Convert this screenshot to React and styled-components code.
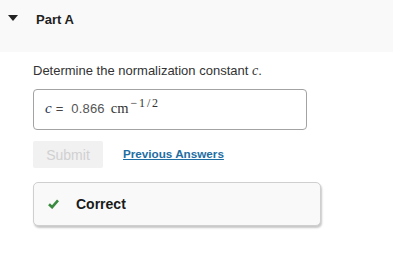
import React from "react";
import styled, { createGlobalStyle } from "styled-components";

const Global = createGlobalStyle`
  html, body { margin: 0; padding: 0; background: #ffffff; }
  body { font-family: "Liberation Sans", Arial, sans-serif; color: #333; }
`;

const Page = styled.div`
  width: 393px;
  min-height: 254px;
  background: #fff;
`;

const Header = styled.div`
  height: 52px;
  box-sizing: border-box;
  background: #f9f9f9;
  padding: 11px 0 0 8px;
  display: flex;
  align-items: flex-start;
`;

const Caret = styled.span`
  width: 0;
  height: 0;
  border-left: 5px solid transparent;
  border-right: 5px solid transparent;
  border-top: 6px solid #222;
  margin-top: 4px;
  margin-right: 18px;
`;

const PartTitle = styled.h2`
  margin: 0;
  font-size: 13px;
  line-height: 18px;
  font-weight: 700;
  color: #1f1f1f;
`;

const Body = styled.div`
  padding: 10px 0 0 33px;
  display: flex;
  flex-direction: column;
  align-items: flex-start;
`;

const Prompt = styled.p`
  margin: 0 0 9px 0;
  font-size: 13px;
  line-height: 18px;
  color: #333;
`;

const MathVar = styled.i`
  font-family: "Liberation Serif", "Times New Roman", serif;
  font-size: ${(p) => p.$size || 14}px;
  color: ${(p) => p.$color || "#333"};
`;

const AnswerBox = styled.div`
  width: 274px;
  height: 41px;
  box-sizing: border-box;
  border: 1px solid #a3a3a3;
  border-radius: 4px;
  padding: 9px 11px 0 11px;
  font-size: 13px;
  line-height: 18px;
  color: #555;
  white-space: nowrap;
`;

const Eq = styled.span`
  color: #444;
  margin: 0 8px 0 4px;
`;

const Value = styled.span`
  color: #555;
  font-size: 13px;
  letter-spacing: 0.2px;
`;

const Unit = styled.span`
  font-family: "Liberation Serif", "Times New Roman", serif;
  font-size: 14.5px;
  color: #333;
  margin-left: 6px;
`;

const Sup = styled.span`
  font-family: "Liberation Serif", "Times New Roman", serif;
  font-size: 12px;
  letter-spacing: 1.8px;
  color: #333;
  vertical-align: 6px;
  line-height: 0;
  margin-left: 2px;
`;

const Actions = styled.div`
  display: flex;
  align-items: center;
  margin-top: 11px;
  gap: 20px;
`;

const SubmitButton = styled.button`
  width: 70px;
  height: 27px;
  border: none;
  border-radius: 2px;
  background: #f1f1f1;
  color: #d0d0d0;
  font-family: "Liberation Sans", Arial, sans-serif;
  font-size: 14px;
  padding: 0;
  cursor: default;
`;

const Link = styled.a`
  font-size: 11.7px;
  line-height: 15px;
  font-weight: 700;
  color: #1f6ea3;
  text-decoration: underline;
  margin-bottom: 3px;
  cursor: pointer;
`;

const Feedback = styled.div`
  margin-top: 14px;
  width: 288px;
  height: 44px;
  box-sizing: border-box;
  border: 1px solid #cfcfcf;
  border-radius: 5px;
  background: #f9f9f9;
  box-shadow: 1px 2px 2px rgba(0, 0, 0, 0.22);
  display: flex;
  align-items: center;
  padding-left: 14px;
  gap: 17px;
`;

const FeedbackText = styled.span`
  font-size: 14px;
  font-weight: 700;
  color: #1a1a1a;
`;

const Check = () => (
  <svg width="11" height="10" viewBox="0 0 11 10">
    <path d="M1 5.2 L4.1 8.2 L10 1.3" fill="none" stroke="#3a8a40" strokeWidth="2.6" strokeLinejoin="miter" />
  </svg>
);

export default function App() {
  return (
    <Page>
      <Global />
      <Header>
        <Caret />
        <PartTitle>Part A</PartTitle>
      </Header>
      <Body>
        <Prompt>
          Determine the normalization constant <MathVar $size={14}>c</MathVar>.
        </Prompt>
        <AnswerBox>
          <MathVar $size={15} $color="#2b3552">c</MathVar>
          <Eq>=</Eq>
          <Value>0.866</Value>
          <Unit>cm</Unit>
          <Sup>−1/2</Sup>
        </AnswerBox>
        <Actions>
          <SubmitButton disabled>Submit</SubmitButton>
          <Link>Previous Answers</Link>
        </Actions>
        <Feedback>
          <Check />
          <FeedbackText>Correct</FeedbackText>
        </Feedback>
      </Body>
    </Page>
  );
}
